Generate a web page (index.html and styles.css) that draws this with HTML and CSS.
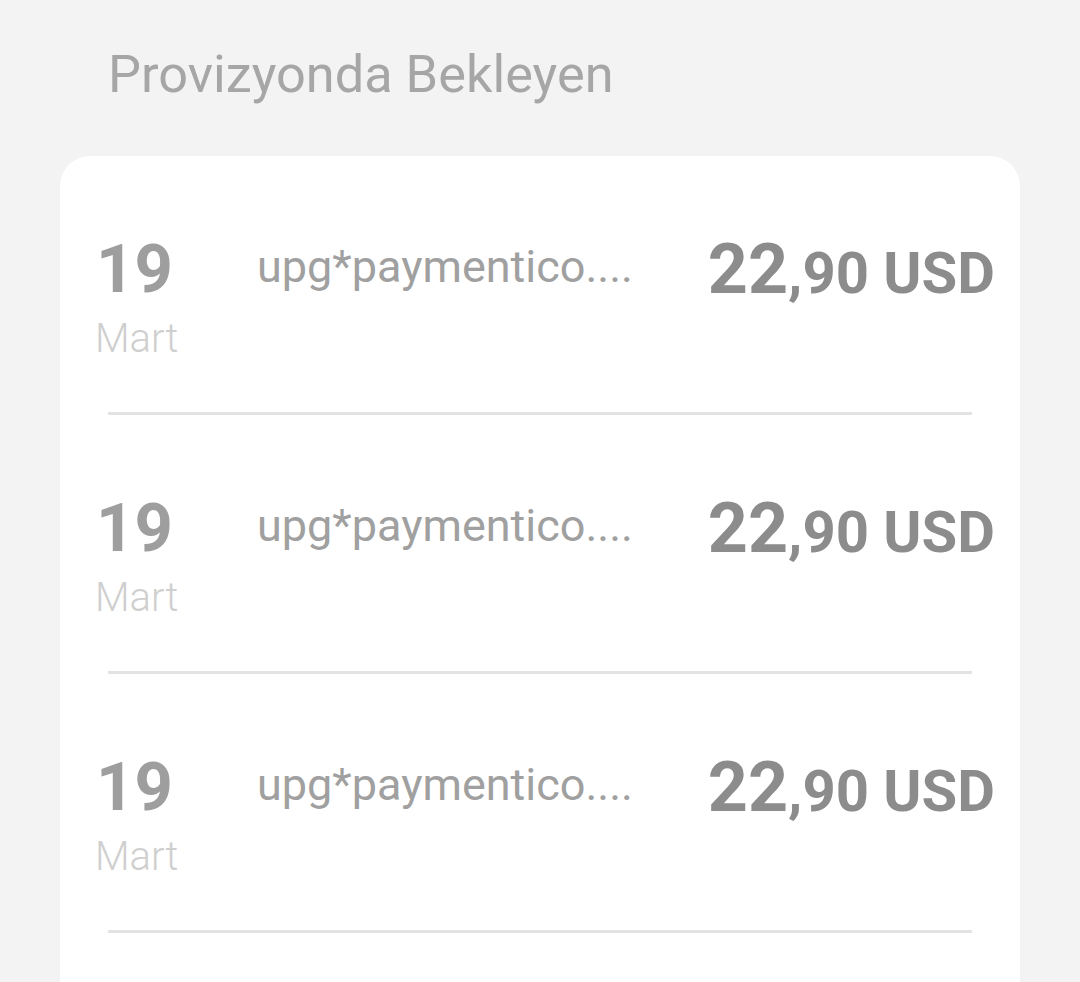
FILE: index.html
```html
<!DOCTYPE html>
<html lang="tr">
<head>
    <meta charset="UTF-8">
    <meta name="viewport" content="width=device-width, initial-scale=1.0">
    <title>Provizyonda Bekleyen</title>
    <link rel="stylesheet" href="styles.css">
</head>
<body>
    <h1 class="title">Provizyonda Bekleyen</h1>
    <div class="card">
        <div class="row">
            <div class="row-main">
                <div class="date">
                    <div class="day">19</div>
                    <div class="month">Mart</div>
                </div>
                <div class="desc">upg*paymentico....</div>
                <div class="amount"><span class="int">22</span>,90 USD</div>
            </div>
            <div class="divider"></div>
        </div>
        <div class="row">
            <div class="row-main">
                <div class="date">
                    <div class="day">19</div>
                    <div class="month">Mart</div>
                </div>
                <div class="desc">upg*paymentico....</div>
                <div class="amount"><span class="int">22</span>,90 USD</div>
            </div>
            <div class="divider"></div>
        </div>
        <div class="row">
            <div class="row-main">
                <div class="date">
                    <div class="day">19</div>
                    <div class="month">Mart</div>
                </div>
                <div class="desc">upg*paymentico....</div>
                <div class="amount"><span class="int">22</span>,90 USD</div>
            </div>
            <div class="divider"></div>
        </div>
    </div>
</body>
</html>
```

FILE: styles.css
```css
* {
    margin: 0;
    padding: 0;
    box-sizing: border-box;
    font-family: Roboto, "Liberation Sans", sans-serif;
}
body {
    background: #f3f3f3;
    height: 982px;
    overflow: hidden;
}
.title {
    font-size: 52.3px;
    font-weight: 400;
    line-height: 53px;
    color: #a6a6a6;
    padding: 48px 0 0 108px;
}
.card {
    background: #fff;
    margin: 55px 60px 0 60px;
    border-radius: 30px;
    padding: 80px 0 80px 0;
}
.row-main {
    display: flex;
    align-items: flex-start;
    padding: 0 25px 53px 35px;
}
.row + .row .row-main {
    padding-top: 80px;
}
.date {
    flex: 0 0 162px;
}
.day {
    font-size: 67px;
    font-weight: 700;
    line-height: 67px;
    color: #9e9e9e;
    padding-left: 1px;
}
.month {
    font-size: 40px;
    font-weight: 300;
    line-height: 40px;
    color: #cfcfcf;
    margin-top: 16px;
}
.desc {
    font-size: 45px;
    line-height: 45px;
    color: #a0a0a0;
    margin-top: 8px;
}
.amount {
    margin-left: auto;
    font-size: 58px;
    font-weight: 700;
    line-height: 72px;
    color: #8c8c8c;
    margin-top: -3px;
}
.amount .int {
    font-size: 70px;
}
.divider {
    height: 3px;
    background: #e3e3e3;
    margin: 0 48px;
}
```
